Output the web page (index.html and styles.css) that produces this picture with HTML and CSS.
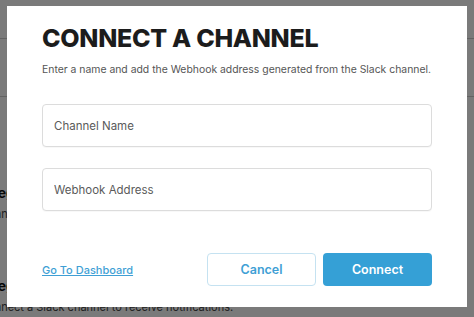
FILE: index.html
```html
<!DOCTYPE html>
<html lang="en">
<head>
    <meta charset="UTF-8" />
    <title>Connect a Channel</title>
    <link rel="stylesheet" href="styles.css">
</head>
<body>
<div class="page">
    <div class="page-head"></div>
    <div class="page-bar"></div>
    <div class="row">
        <div class="row-title">Integrations</div>
        <div class="row-text">Connect a Slack channel to receive notifications.</div>
    </div>
    <div class="row">
        <div class="row-title">Integrations</div>
        <div class="row-text">Connect a Slack channel to receive notifications.</div>
    </div>
</div>

<div class="overlay">
    <div class="modal">
        <h1>CONNECT A CHANNEL</h1>
        <p class="lead">Enter a name and add the Webhook address generated from the Slack channel.</p>
        <form class="fields">
            <input type="text" placeholder="Channel Name">
            <input type="text" placeholder="Webhook Address">
        </form>
        <div class="actions">
            <a href="#" class="link">Go To Dashboard</a>
            <div class="buttons">
                <button class="btn btn-outline">Cancel</button>
                <button class="btn btn-primary">Connect</button>
            </div>
        </div>
    </div>
</div>
</body>
</html>
```

FILE: styles.css
```css
body {
    font-family: 'Inter', 'Liberation Sans', sans-serif;
    margin: 0;
    padding: 0;
    background-color: #fff;
    color: #222;
    width: 474px;
    height: 317px;
    overflow: hidden;
}

.page {
    height: 317px;
}

.page-head {
    height: 38px;
    border-bottom: 1px solid #ccc;
}

.page-bar {
    height: 57px;
    border-bottom: 1px solid #ccc;
}

.row {
    padding: 87px 0 0 0;
    margin-left: -20px;
}

.row + .row {
    padding-top: 56px;
}

.row-title {
    font-weight: 700;
    font-size: 14px;
    color: #111;
}

.row-text {
    font-size: 11px;
    color: #444;
    margin-top: 6px;
}

.overlay {
    position: fixed;
    inset: 0;
    background: rgba(0, 0, 0, 0.52);
    padding: 6px 7px 0 7px;
}

.modal {
    background: #fff;
    height: 301px;
    box-sizing: border-box;
    padding: 17px 35px 0 35px;
}

.modal h1 {
    margin: 0;
    font-size: 25px;
    line-height: 30px;
    font-weight: 800;
    color: #1c1c1c;
    letter-spacing: -0.3px;
}

.lead {
    margin: 10px 0 0;
    font-size: 10.4px;
    line-height: 14px;
    color: #555;
    white-space: nowrap;
}

.fields {
    display: flex;
    flex-direction: column;
    gap: 21px;
    margin-top: 27px;
}

.fields input {
    height: 43px;
    box-sizing: border-box;
    border: 1px solid #dcdcdc;
    border-radius: 4px;
    padding: 0 11px;
    font-family: inherit;
    font-size: 11.5px;
    color: #333;
    box-shadow: 0 1px 1px rgba(0, 0, 0, 0.03);
}

.fields input::placeholder {
    color: #5a5a5a;
}

.actions {
    display: flex;
    justify-content: space-between;
    align-items: center;
    margin-top: 42px;
}

.link {
    color: #3f9fd5;
    font-size: 11px;
    font-weight: 500;
    text-decoration: underline;
}

.buttons {
    display: flex;
    gap: 7px;
}

.btn {
    width: 109px;
    height: 33px;
    border-radius: 4px;
    font-family: inherit;
    font-size: 12.5px;
    font-weight: 600;
    cursor: pointer;
}

.btn-outline {
    background: #fff;
    border: 1px solid #c5e2f1;
    color: #3f9fd5;
}

.btn-primary {
    background: #35a0d6;
    border: none;
    color: #fff;
}
```
